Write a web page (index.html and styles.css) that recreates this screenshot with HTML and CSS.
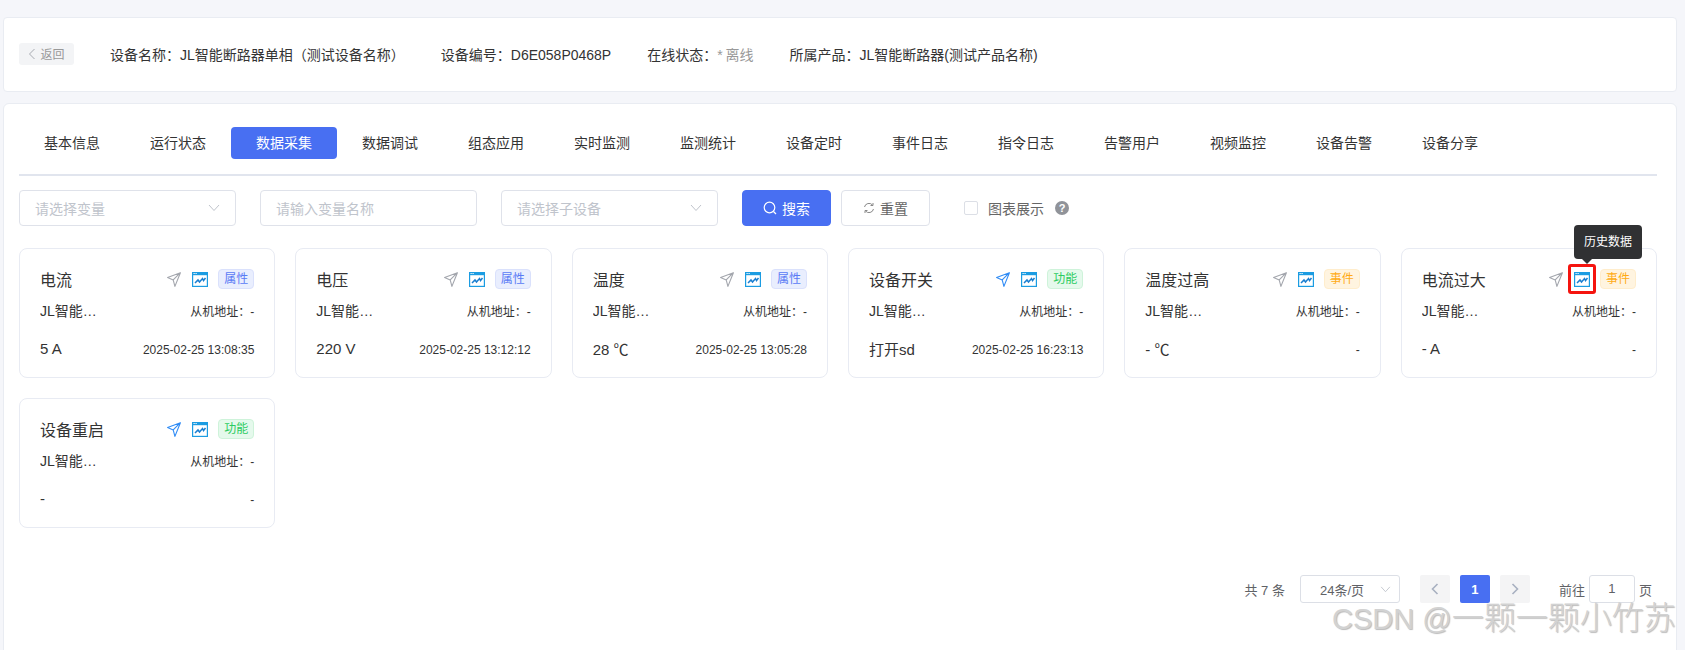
FILE: index.html
```html
<!DOCTYPE html>
<html lang="en">
<head>
  <meta charset="UTF-8">
  <meta name="viewport" content="width=device-width, initial-scale=1.0">
  <title>设备详情</title>
  <link rel="stylesheet" href="styles.css">
</head>
<body>
  <svg class="sprites" width="0" height="0">
    <symbol id="send" viewBox="0 0 14 15"><path d="M13.4.7.6 5.600l5.600 2.300 1.700 6.500L13.400.7ZM13.400.7 6.200 7.900" fill="none" stroke="currentColor" stroke-width="1.100" stroke-linejoin="round"/></symbol>
    <symbol id="chart" viewBox="0 0 16 15"><path d="M0 0h16v15H0z" fill="#1b9ce2"/><path d="M1.200 3.200h13.600v10.600H1.200z" fill="#fff"/><path d="M1.500 1h1.200v1H1.500zM3.500 1h1.200v1H3.500z" fill="#fff"/><path d="M3 11 6 8l1.500 2L10.500 6.500 11.500 8.500 13.500 6" fill="none" stroke="#1b7fd0" stroke-width="1.500"/></symbol>
  </svg>

  <div class="page">
    <div class="device-bar">
      <button class="back-btn"><svg width="8" height="12" viewBox="0 0 8 12"><path d="M6.500 1 1.500 6l5 5" fill="none" stroke="#a8abb2" stroke-width="1"/></svg>返回</button>
      <span>设备名称：JL智能断路器单相（测试设备名称）</span>
      <span>设备编号：D6E058P0468P</span>
      <span>在线状态：<i class="dot">*</i> <em>离线</em></span>
      <span>所属产品：JL智能断路器(测试产品名称)</span>
    </div>

    <div class="main-panel">
      <div class="tabs">
        <div class="tab">基本信息</div>
        <div class="tab">运行状态</div>
        <div class="tab active">数据采集</div>
        <div class="tab">数据调试</div>
        <div class="tab">组态应用</div>
        <div class="tab">实时监测</div>
        <div class="tab">监测统计</div>
        <div class="tab">设备定时</div>
        <div class="tab">事件日志</div>
        <div class="tab">指令日志</div>
        <div class="tab">告警用户</div>
        <div class="tab">视频监控</div>
        <div class="tab">设备告警</div>
        <div class="tab">设备分享</div>
      </div>

      <div class="filters">
        <div class="field">请选择变量<svg class="arrow" width="12" height="8" viewBox="0 0 12 8"><path d="m1 1 5 5.500L11 1" fill="none" stroke="#c0c4cc"/></svg></div>
        <div class="field">请输入变量名称</div>
        <div class="field">请选择子设备<svg class="arrow" width="12" height="8" viewBox="0 0 12 8"><path d="m1 1 5 5.500L11 1" fill="none" stroke="#c0c4cc"/></svg></div>
        <button class="btn btn-primary"><svg width="14" height="14" viewBox="0 0 14 14"><circle cx="6.500" cy="6.500" r="5.300" fill="none" stroke="#fff" stroke-width="1.200"/><path d="m10.500 10.500 2.500 2.500" stroke="#fff" stroke-width="1.200"/></svg>搜索</button>
        <button class="btn"><svg width="12" height="12" viewBox="0 0 12 12"><path d="M1.500 5A4.600 4.600 0 0 1 9.500 3M10.500 7A4.600 4.600 0 0 1 2.500 9" fill="none" stroke="#888" stroke-width="1"/><path d="M10 1v2.500H7.500M2 11V8.500h2.500" fill="none" stroke="#888" stroke-width="1"/></svg>重置</button>
        <label class="chart-toggle"><span class="check"></span>图表展示</label>
        <span class="help">?</span>
      </div>

      <div class="card-grid">
        <div class="card">
          <div class="card-head"><span class="card-title">电流</span><svg class="ic-send"><use href="#send"/></svg><svg class="ic-chart"><use href="#chart"/></svg><span class="tag tag-prop">属性</span></div>
          <div class="card-row"><span class="card-name">JL智能断路器单相</span><span class="small">从机地址：-</span></div>
          <div class="card-row card-val"><span>5 A</span><span class="small">2025-02-25 13:08:35</span></div>
        </div>
        <div class="card">
          <div class="card-head"><span class="card-title">电压</span><svg class="ic-send"><use href="#send"/></svg><svg class="ic-chart"><use href="#chart"/></svg><span class="tag tag-prop">属性</span></div>
          <div class="card-row"><span class="card-name">JL智能断路器单相</span><span class="small">从机地址：-</span></div>
          <div class="card-row card-val"><span>220 V</span><span class="small">2025-02-25 13:12:12</span></div>
        </div>
        <div class="card">
          <div class="card-head"><span class="card-title">温度</span><svg class="ic-send"><use href="#send"/></svg><svg class="ic-chart"><use href="#chart"/></svg><span class="tag tag-prop">属性</span></div>
          <div class="card-row"><span class="card-name">JL智能断路器单相</span><span class="small">从机地址：-</span></div>
          <div class="card-row card-val"><span>28 ℃</span><span class="small">2025-02-25 13:05:28</span></div>
        </div>
        <div class="card">
          <div class="card-head"><span class="card-title">设备开关</span><svg class="ic-send on"><use href="#send"/></svg><svg class="ic-chart"><use href="#chart"/></svg><span class="tag tag-func">功能</span></div>
          <div class="card-row"><span class="card-name">JL智能断路器单相</span><span class="small">从机地址：-</span></div>
          <div class="card-row card-val"><span>打开sd</span><span class="small">2025-02-25 16:23:13</span></div>
        </div>
        <div class="card">
          <div class="card-head"><span class="card-title">温度过高</span><svg class="ic-send"><use href="#send"/></svg><svg class="ic-chart"><use href="#chart"/></svg><span class="tag tag-event">事件</span></div>
          <div class="card-row"><span class="card-name">JL智能断路器单相</span><span class="small">从机地址：-</span></div>
          <div class="card-row card-val"><span>- ℃</span><span class="small">-</span></div>
        </div>
        <div class="card">
          <div class="card-head"><span class="card-title">电流过大</span><svg class="ic-send"><use href="#send"/></svg>
            <span class="chart-wrap">
              <svg class="ic-chart"><use href="#chart"/></svg>
              <span class="red-box"></span>
              <span class="tooltip">历史数据</span>
            </span>
            <span class="tag tag-event">事件</span></div>
          <div class="card-row"><span class="card-name">JL智能断路器单相</span><span class="small">从机地址：-</span></div>
          <div class="card-row card-val"><span>- A</span><span class="small">-</span></div>
        </div>
        <div class="card">
          <div class="card-head"><span class="card-title">设备重启</span><svg class="ic-send on"><use href="#send"/></svg><svg class="ic-chart"><use href="#chart"/></svg><span class="tag tag-func">功能</span></div>
          <div class="card-row"><span class="card-name">JL智能断路器单相</span><span class="small">从机地址：-</span></div>
          <div class="card-row card-val"><span>-</span><span class="small">-</span></div>
        </div>
      </div>

      <div class="pager">
        <span class="total">共 7 条</span>
        <div class="page-size">24条/页<svg class="arrow" width="11" height="7" viewBox="0 0 12 8"><path d="m1 1 5 5.500L11 1" fill="none" stroke="#c0c4cc"/></svg></div>
        <button class="page-btn"><svg width="8" height="12" viewBox="0 0 8 12"><path d="M6.500 1 1.500 6l5 5" fill="none" stroke="#a8b0c0" stroke-width="1.600"/></svg></button>
        <button class="page-btn current">1</button>
        <button class="page-btn"><svg width="8" height="12" viewBox="0 0 8 12"><path d="m1.500 1 5 5-5 5" fill="none" stroke="#a8b0c0" stroke-width="1.600"/></svg></button>
        <span class="jump">前往</span>
        <div class="jump-input">1</div>
        <span class="jump-end">页</span>
      </div>
    </div>
  </div>

  <div class="watermark">CSDN @<span class="wm-name">一颗一颗小竹苏</span></div>
</body>
</html>
```

FILE: styles.css
```css
/* Page */
body {
  margin: 0;
  height: 650px;
  overflow: hidden;
  position: relative;
  background-color: #f5f6fa;
  color: #333;
  font-family: "Liberation Sans", "Noto Sans CJK SC", sans-serif;
  font-size: 14px;
}

.sprites {
  position: absolute;
}

.page {
  display: flex;
  flex-direction: column;
  gap: 11px;
  height: 650px;
  padding: 17px 8px 0 3px;
}

/* Device info bar */
.device-bar {
  display: flex;
  align-items: center;
  gap: 36px;
  box-sizing: border-box;
  height: 75px;
  padding: 0 15px 2px;
  background-color: #fff;
  border: 1px solid #e9ecf2;
  border-radius: 4px;
  font-size: 14px;
}

.back-btn {
  display: flex;
  align-items: center;
  justify-content: center;
  gap: 4px;
  width: 55px;
  height: 22px;
  padding: 0;
  border: none;
  border-radius: 3px;
  background-color: #f3f4f6;
  color: #999;
  font-family: inherit;
  font-size: 12px;
}

.dot {
  color: #999;
  font-style: normal;
  letter-spacing: -1px;
}

.device-bar em {
  color: #999;
  font-style: normal;
}

/* Main panel */
.main-panel {
  flex: 1;
  box-sizing: border-box;
  padding: 23px 19px 0 15px;
  background-color: #fff;
  border: 1px solid #e9ecf2;
  border-radius: 6px 6px 0 0;
}

.tabs {
  display: flex;
  height: 47px;
  border-bottom: 2px solid #e1e5ee;
}

.tab {
  width: 106px;
  height: 32px;
  line-height: 32px;
  text-align: center;
  border-radius: 4px;
}

.tab.active {
  background-color: #486ff2;
  color: #fff;
}

/* Filters */
.filters {
  display: flex;
  align-items: center;
  margin-top: 14px;
  height: 36px;
}

.field {
  display: flex;
  align-items: center;
  justify-content: space-between;
  box-sizing: border-box;
  width: 217px;
  height: 36px;
  margin-right: 24px;
  padding: 0 15px;
  border: 1px solid #dfe2ea;
  border-radius: 4px;
  color: #c0c4cc;
}

.btn {
  display: flex;
  align-items: center;
  justify-content: center;
  gap: 5px;
  box-sizing: border-box;
  width: 89px;
  height: 36px;
  margin-right: 10px;
  border: 1px solid #dfe2ea;
  border-radius: 4px;
  background-color: #fff;
  color: #666;
  font-family: inherit;
  font-size: 14px;
}

.btn-primary {
  background-color: #486ff2;
  border-color: #486ff2;
  color: #fff;
}

.chart-toggle {
  display: flex;
  align-items: center;
  gap: 10px;
  margin-left: 24px;
  color: #666;
}

.check {
  box-sizing: border-box;
  width: 14px;
  height: 14px;
  border: 1px solid #dcdfe6;
  border-radius: 2px;
}

.help {
  width: 14px;
  height: 14px;
  margin-left: 11px;
  border-radius: 50%;
  background-color: #909399;
  color: #fff;
  font-size: 11px;
  font-weight: bold;
  line-height: 14px;
  text-align: center;
}

/* Cards */
.card-grid {
  display: grid;
  grid-template-columns: repeat(6, 1fr);
  gap: 20px;
  margin-top: 22px;
}

.card {
  box-sizing: border-box;
  height: 130px;
  padding: 20px 20px 0;
  border: 1px solid #e8ebf3;
  border-radius: 8px;
}

.card-head {
  display: flex;
  align-items: center;
  height: 20px;
}

.card-title {
  flex: 1;
  font-size: 16px;
}

.ic-send {
  width: 14px;
  height: 15px;
  margin-right: 11px;
  color: #a3a6ad;
}

.ic-send.on {
  color: #2f8bf5;
}

.ic-chart {
  display: block;
  width: 16px;
  height: 15px;
}

.tag {
  box-sizing: border-box;
  width: 36px;
  height: 20px;
  margin-left: 10px;
  border: 1px solid;
  border-radius: 4px;
  font-size: 12px;
  line-height: 18px;
  text-align: center;
}

.tag-prop {
  background-color: #e9eefe;
  border-color: #dae1fc;
  color: #5a7bf5;
}

.tag-func {
  background-color: #e5f9ec;
  border-color: #cef3da;
  color: #2ccb60;
}

.tag-event {
  background-color: #fff4e0;
  border-color: #ffedcc;
  color: #ffab14;
}

.card-row {
  display: flex;
  align-items: center;
  justify-content: space-between;
  height: 20px;
  margin-top: 11px;
  font-size: 14px;
}

.card-name {
  width: 58px;
  overflow: hidden;
  white-space: nowrap;
  text-overflow: ellipsis;
}

.small {
  font-size: 12px;
}

.card-val {
  margin-top: 18px;
  font-size: 15px;
}

.card-val .small {
  padding-top: 4px;
}

/* History tooltip and the red marker over it */
.chart-wrap {
  position: relative;
  display: block;
}

.red-box {
  position: absolute;
  left: -6px;
  top: -8px;
  width: 22px;
  height: 24px;
  border: 3px solid #f5140f;
  border-radius: 3px;
}

.tooltip {
  position: absolute;
  left: 0;
  top: -47px;
  width: 68px;
  height: 34px;
  border-radius: 4px;
  background-color: #303133;
  color: #fff;
  font-size: 12px;
  line-height: 34px;
  text-align: center;
}

.tooltip::after {
  content: "";
  position: absolute;
  left: 8px;
  bottom: -5px;
  border-left: 5px solid transparent;
  border-right: 5px solid transparent;
  border-top: 5px solid #303133;
}

/* Pagination */
.pager {
  display: flex;
  align-items: center;
  justify-content: flex-end;
  height: 28px;
  margin-top: 47px;
  padding-right: 5px;
  color: #606266;
  font-size: 13px;
}

.page-size {
  display: flex;
  align-items: center;
  justify-content: space-between;
  box-sizing: border-box;
  width: 100px;
  height: 28px;
  margin-left: 15px;
  padding: 0 8px 0 19px;
  border: 1px solid #dcdfe6;
  border-radius: 3px;
}

.page-btn {
  display: flex;
  align-items: center;
  justify-content: center;
  width: 30px;
  height: 28px;
  margin-left: 10px;
  padding: 0;
  border: none;
  border-radius: 2px;
  background-color: #f4f4f5;
  font-family: inherit;
}

.page-size + .page-btn {
  margin-left: 20px;
}

.page-btn.current {
  background-color: #486ff2;
  color: #fff;
  font-size: 13px;
  font-weight: bold;
}

.jump {
  margin-left: 29px;
}

.jump-input {
  box-sizing: border-box;
  width: 46px;
  height: 28px;
  margin: 0 4px;
  border: 1px solid #dcdfe6;
  border-radius: 3px;
  line-height: 26px;
  text-align: center;
}

/* CSDN watermark */
.watermark {
  position: absolute;
  left: 1332px;
  top: 600px;
  color: #d2d2d2;
  font-size: 29px;
  line-height: 36px;
  white-space: nowrap;
  text-shadow: 1px 1px 1px #bbb;
}

.wm-name {
  font-size: 32px;
  font-weight: 300;
}
```
